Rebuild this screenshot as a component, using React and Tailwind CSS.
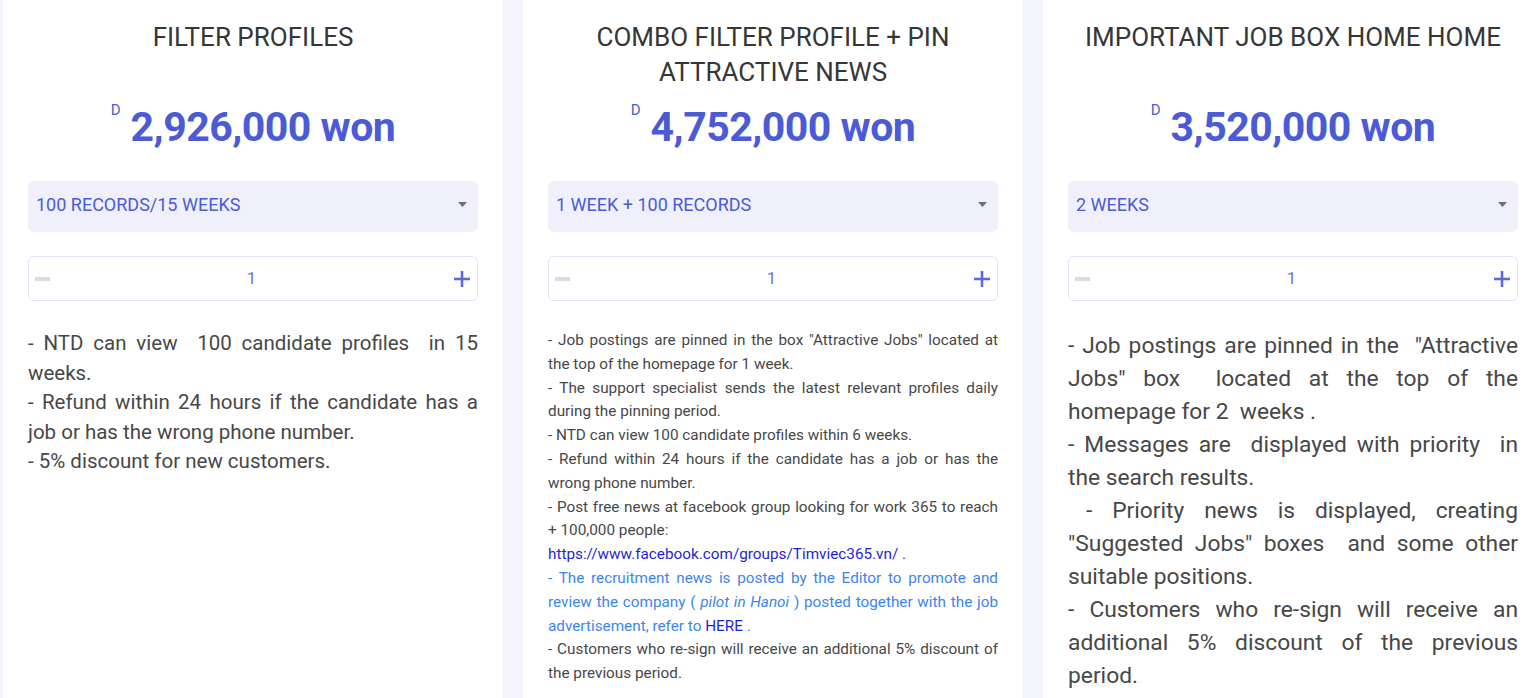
import React from 'react';

const BLUE = 'text-[#4b5bd6]';

const plans = [
  {
    title: ['FILTER PROFILES'],
    price: '2,926,000 won',
    option: '100 RECORDS/15 WEEKS',
    size: 'text-[20.5px] leading-[29.5px]',
  },
  {
    title: ['COMBO FILTER PROFILE + PIN', 'ATTRACTIVE NEWS'],
    price: '4,752,000 won',
    option: '1 WEEK + 100 RECORDS',
    size: 'text-[15.3px] leading-[23.8px]',
  },
  {
    title: ['IMPORTANT JOB BOX HOME HOME'],
    price: '3,520,000 won',
    option: '2 WEEKS',
    size: 'text-[22.8px] leading-[33px]',
  },
];

const FilterText = () => (
  <>
    <div>- NTD can view&nbsp; 100 candidate profiles&nbsp; in 15 weeks.</div>
    <div>- Refund within 24 hours if the candidate has a job or has the wrong phone number.</div>
    <div>- 5% discount for new customers.</div>
  </>
);

const ComboText = () => (
  <>
    <div>- Job postings are pinned in the box "Attractive Jobs" located at the top of the homepage for 1 week.</div>
    <div>- The support specialist sends the latest relevant profiles daily during the pinning period.</div>
    <div>- NTD can view 100 candidate profiles within 6 weeks.</div>
    <div>- Refund within 24 hours if the candidate has a job or has the wrong phone number.</div>
    <div>
      - Post free news at facebook group looking for work 365 to reach + 100,000 people:
      <br />
      <span className="text-[#1f1fd6]">https://www.facebook.com/groups/Timviec365.vn/</span> .
    </div>
    <div className="text-[#3d85ee]">
      - The recruitment news is posted by the Editor to promote and review the company ( <i>pilot in Hanoi</i> ) posted
      together with the job advertisement, refer to <span className="text-[#1f1fd6]">HERE</span> .
    </div>
    <div>- Customers who re-sign will receive an additional 5% discount of the previous period.</div>
  </>
);

const JobBoxText = () => (
  <>
    <div>- Job postings are pinned in the&nbsp; "Attractive Jobs" box&nbsp; located at the top of the homepage for 2&nbsp; weeks .</div>
    <div>- Messages are&nbsp; displayed with priority&nbsp; in the search results.</div>
    <div>
      <span className="inline-block w-[18px]" />- Priority news is displayed, creating "Suggested Jobs" boxes&nbsp; and some other suitable positions.
    </div>
    <div>- Customers who re-sign will receive an additional 5% discount of the previous period.</div>
  </>
);

const bodies = [FilterText, ComboText, JobBoxText];

const PlanCard = ({ plan, Body }) => (
  <div className="w-[500px] shrink-0 h-full bg-white px-[25px] pt-[20px]">
    <div className="h-[70px] text-center text-[26px] leading-[35px] text-[#363636]">
      {plan.title.map((t) => (
        <div key={t}>{t}</div>
      ))}
    </div>
    <div className={`mt-[9px] h-[56px] flex items-center justify-center ${BLUE}`}>
      <span className="self-start mt-[4px] mr-[10px] text-[15px] leading-none">D</span>
      <span className="text-[41px] font-bold tracking-[-0.5px] leading-none">{plan.price}</span>
    </div>
    <div className="mt-[26px] h-[51px] rounded-md bg-[#eff0fb] flex items-center justify-between pl-[8px] pr-[11px] pb-[4px]">
      <span className={`text-[18px] ${BLUE}`}>{plan.option}</span>
      <svg width="9" height="5" viewBox="0 0 9 5">
        <path d="M0 0 L9 0 L4.5 5 Z" fill="#6e6e6e" />
      </svg>
    </div>
    <div className="mt-[24px] h-[45px] rounded-md border border-[#e3e4f6] flex items-center justify-between pl-[6px] pr-[6px]">
      <span className="w-[15px] h-[4px] bg-[#dcdcdc]" />
      <span className="text-[16px] text-[#6470dc]">1</span>
      <svg width="18" height="18" viewBox="0 0 18 18">
        <path d="M9 1 V17 M1 9 H17" stroke="#5b69db" strokeWidth="2.6" />
      </svg>
    </div>
    <div className={`mt-[28px] text-justify text-[#474747] ${plan.size}`}>
      <Body />
    </div>
  </div>
);

export default function App() {
  return (
    <div
      className="w-[1536px] h-[698px] overflow-hidden bg-[#f4f5fc] flex gap-[20px] pl-[3px]"
      style={{ fontFamily: 'Roboto, "Liberation Sans", sans-serif' }}
    >
      {plans.map((p, i) => (
        <PlanCard key={p.price} plan={p} Body={bodies[i]} />
      ))}
    </div>
  );
}
